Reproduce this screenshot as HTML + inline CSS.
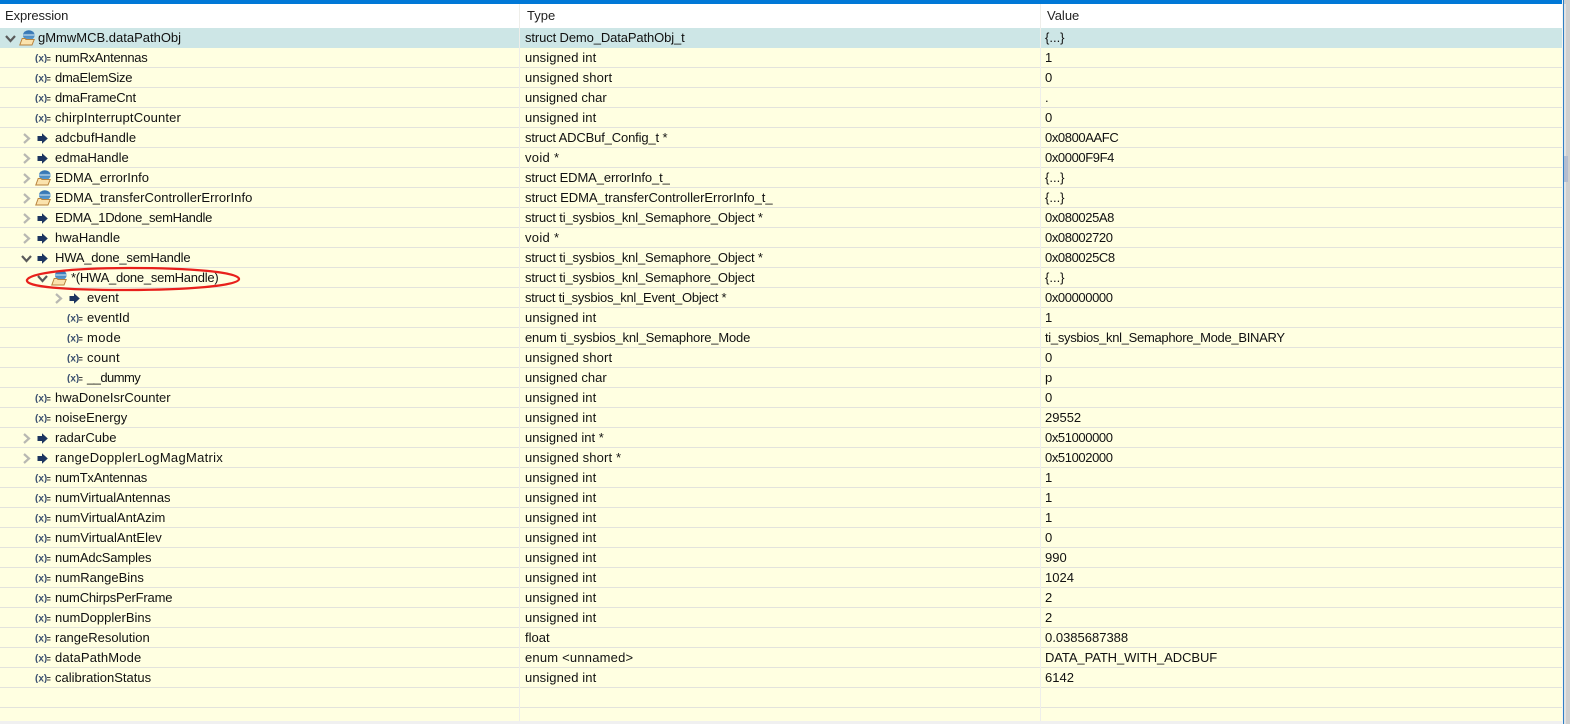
<!DOCTYPE html>
<html><head><meta charset="utf-8">
<style>
html,body{margin:0;padding:0;background:#fff}
#p{position:relative;width:1570px;height:724px;overflow:hidden;background:#fff;font:13px/19px "Liberation Sans","Noto Sans CJK SC",sans-serif;color:#111}
.bar{position:absolute;left:0;top:0;width:1564px;height:4px;background:#0078d7}
.head{position:absolute;left:0;top:4px;width:1562px;height:24px;background:#fff}
.head span{position:absolute;top:2px;color:#222}
.tbl{position:absolute;left:0;top:28px;width:1562px}
.r{position:relative;height:19px;border-bottom:1px solid #e3e3dc;background:#ffffe1;width:1562px}
.r.s{background:#cde6e6;border-bottom-color:#cde6e6}
.r span{position:absolute;top:0;white-space:nowrap}
.c2{left:525px}.c3{left:1045px}
.ui{letter-spacing:.1px}.us{letter-spacing:.14px}
.hx{letter-spacing:-.4px}
.so{letter-spacing:-.16px}
.r svg{position:absolute}
.v{position:absolute;top:4px;width:1px;height:717px;background:#eeeeea}
.foot{position:absolute;left:0;top:721px;width:1562px;height:3px;background:#f0f0f0}
</style></head><body><div id="p">
<svg width="0" height="0" style="position:absolute">
<defs>
<linearGradient id="bl" x1="0" y1="0" x2="0" y2="1"><stop offset="0" stop-color="#2f6fb0"/><stop offset="1" stop-color="#5f9fd0"/></linearGradient>
<symbol id="cr" viewBox="0 0 9 11"><path d="M2 1 L7 5.5 L2 10" fill="none" stroke="#b8b8b2" stroke-width="2.2"/></symbol>
<symbol id="cd" viewBox="0 0 11 9"><path d="M1 2 L5.5 7 L10 2" fill="none" stroke="#5a5a5a" stroke-width="2.2"/></symbol>
<symbol id="ar" viewBox="0 0 11 11"><path d="M0.5 3 H5 V0.3 L10.8 5.5 L5 10.7 V8 H0.5 Z" fill="#1c3560"/></symbol>
<symbol id="ob" viewBox="0 0 16 16"><ellipse cx="9.8" cy="5.2" rx="5.8" ry="5" fill="url(#bl)"/><path d="M4.2 5 H15.4" stroke="#bcd6ea" stroke-width="1.3"/><path d="M0.8 15 L3.2 8.5 H6 L7 9.5 H15.2 L13 15 Z" fill="#fbe3ad" stroke="#b8823c"/></symbol>
<symbol id="xv" viewBox="0 0 16 10"><text x="0" y="8.5" font-family="Liberation Sans" font-size="10" font-weight="bold" fill="#3a4f70">(x)</text><path d="M12 4.5 H15.5 M12 7 H15.5" stroke="#444" stroke-width="1"/></symbol>
</defs>
</svg>
<div class="bar"></div>
<div class="head"><span style="left:5px;letter-spacing:-.1px">Expression</span><span style="left:527px">Type</span><span style="left:1047px">Value</span></div>
<div class="tbl">
<div class="r s"><svg style="left:5px;top:6px" width="11" height="9"><use href="#cd"/></svg><svg style="left:19px;top:2px" width="16" height="16"><use href="#ob"/></svg><span style="left:38px">gMmwMCB.dataPathObj</span><span class="c2" style="letter-spacing:-.12px">struct Demo_DataPathObj_t</span><span class="c3">{...}</span></div>
<div class="r"><svg style="left:35px;top:5px" width="16" height="10"><use href="#xv"/></svg><span style="left:55px;letter-spacing:-.28px">numRxAntennas</span><span class="c2 ui">unsigned int</span><span class="c3">1</span></div>
<div class="r"><svg style="left:35px;top:5px" width="16" height="10"><use href="#xv"/></svg><span style="left:55px;letter-spacing:-.27px">dmaElemSize</span><span class="c2 us">unsigned short</span><span class="c3">0</span></div>
<div class="r"><svg style="left:35px;top:5px" width="16" height="10"><use href="#xv"/></svg><span style="left:55px;letter-spacing:-.2px">dmaFrameCnt</span><span class="c2">unsigned char</span><span class="c3">.</span></div>
<div class="r"><svg style="left:35px;top:5px" width="16" height="10"><use href="#xv"/></svg><span style="left:55px;letter-spacing:.15px">chirpInterruptCounter</span><span class="c2 ui">unsigned int</span><span class="c3">0</span></div>
<div class="r"><svg style="left:22px;top:5px" width="9" height="11"><use href="#cr"/></svg><svg style="left:37px;top:5px" width="11" height="11"><use href="#ar"/></svg><span style="left:55px;letter-spacing:.08px">adcbufHandle</span><span class="c2" style="letter-spacing:-.15px">struct ADCBuf_Config_t *</span><span class="c3 hx">0x0800AAFC</span></div>
<div class="r"><svg style="left:22px;top:5px" width="9" height="11"><use href="#cr"/></svg><svg style="left:37px;top:5px" width="11" height="11"><use href="#ar"/></svg><span style="left:55px">edmaHandle</span><span class="c2" style="letter-spacing:.3px">void *</span><span class="c3 hx">0x0000F9F4</span></div>
<div class="r"><svg style="left:22px;top:5px" width="9" height="11"><use href="#cr"/></svg><svg style="left:35px;top:2px" width="16" height="16"><use href="#ob"/></svg><span style="left:55px">EDMA_errorInfo</span><span class="c2" style="letter-spacing:-.11px">struct EDMA_errorInfo_t_</span><span class="c3">{...}</span></div>
<div class="r"><svg style="left:22px;top:5px" width="9" height="11"><use href="#cr"/></svg><svg style="left:35px;top:2px" width="16" height="16"><use href="#ob"/></svg><span style="left:55px;letter-spacing:.05px">EDMA_transferControllerErrorInfo</span><span class="c2" style="letter-spacing:-.04px">struct EDMA_transferControllerErrorInfo_t_</span><span class="c3">{...}</span></div>
<div class="r"><svg style="left:22px;top:5px" width="9" height="11"><use href="#cr"/></svg><svg style="left:37px;top:5px" width="11" height="11"><use href="#ar"/></svg><span style="left:55px;letter-spacing:-.3px">EDMA_1Ddone_semHandle</span><span class="c2 so">struct ti_sysbios_knl_Semaphore_Object *</span><span class="c3 hx">0x080025A8</span></div>
<div class="r"><svg style="left:22px;top:5px" width="9" height="11"><use href="#cr"/></svg><svg style="left:37px;top:5px" width="11" height="11"><use href="#ar"/></svg><span style="left:55px">hwaHandle</span><span class="c2" style="letter-spacing:.3px">void *</span><span class="c3 hx">0x08002720</span></div>
<div class="r"><svg style="left:21px;top:6px" width="11" height="9"><use href="#cd"/></svg><svg style="left:37px;top:5px" width="11" height="11"><use href="#ar"/></svg><span style="left:55px;letter-spacing:-.2px">HWA_done_semHandle</span><span class="c2 so">struct ti_sysbios_knl_Semaphore_Object *</span><span class="c3 hx">0x080025C8</span></div>
<div class="r"><svg style="left:37px;top:6px" width="11" height="9"><use href="#cd"/></svg><svg style="left:51px;top:2px" width="16" height="16"><use href="#ob"/></svg><span style="left:71px;letter-spacing:-.25px">*(HWA_done_semHandle)</span><span class="c2 so">struct ti_sysbios_knl_Semaphore_Object</span><span class="c3">{...}</span></div>
<div class="r"><svg style="left:54px;top:5px" width="9" height="11"><use href="#cr"/></svg><svg style="left:69px;top:5px" width="11" height="11"><use href="#ar"/></svg><span style="left:87px">event</span><span class="c2" style="letter-spacing:-.25px">struct ti_sysbios_knl_Event_Object *</span><span class="c3 hx">0x00000000</span></div>
<div class="r"><svg style="left:67px;top:5px" width="16" height="10"><use href="#xv"/></svg><span style="left:87px">eventId</span><span class="c2 ui">unsigned int</span><span class="c3">1</span></div>
<div class="r"><svg style="left:67px;top:5px" width="16" height="10"><use href="#xv"/></svg><span style="left:87px;letter-spacing:.4px">mode</span><span class="c2" style="letter-spacing:-.18px">enum ti_sysbios_knl_Semaphore_Mode</span><span class="c3" style="letter-spacing:-.3px">ti_sysbios_knl_Semaphore_Mode_BINARY</span></div>
<div class="r"><svg style="left:67px;top:5px" width="16" height="10"><use href="#xv"/></svg><span style="left:87px;letter-spacing:.2px">count</span><span class="c2 us">unsigned short</span><span class="c3">0</span></div>
<div class="r"><svg style="left:67px;top:5px" width="16" height="10"><use href="#xv"/></svg><span style="left:87px;letter-spacing:-.55px">__dummy</span><span class="c2">unsigned char</span><span class="c3">p</span></div>
<div class="r"><svg style="left:35px;top:5px" width="16" height="10"><use href="#xv"/></svg><span style="left:55px">hwaDoneIsrCounter</span><span class="c2 ui">unsigned int</span><span class="c3">0</span></div>
<div class="r"><svg style="left:35px;top:5px" width="16" height="10"><use href="#xv"/></svg><span style="left:55px">noiseEnergy</span><span class="c2 ui">unsigned int</span><span class="c3">29552</span></div>
<div class="r"><svg style="left:22px;top:5px" width="9" height="11"><use href="#cr"/></svg><svg style="left:37px;top:5px" width="11" height="11"><use href="#ar"/></svg><span style="left:55px">radarCube</span><span class="c2">unsigned int *</span><span class="c3 hx">0x51000000</span></div>
<div class="r"><svg style="left:22px;top:5px" width="9" height="11"><use href="#cr"/></svg><svg style="left:37px;top:5px" width="11" height="11"><use href="#ar"/></svg><span style="left:55px;letter-spacing:.29px">rangeDopplerLogMagMatrix</span><span class="c2 us">unsigned short *</span><span class="c3 hx">0x51002000</span></div>
<div class="r"><svg style="left:35px;top:5px" width="16" height="10"><use href="#xv"/></svg><span style="left:55px;letter-spacing:-.2px">numTxAntennas</span><span class="c2 ui">unsigned int</span><span class="c3">1</span></div>
<div class="r"><svg style="left:35px;top:5px" width="16" height="10"><use href="#xv"/></svg><span style="left:55px;letter-spacing:-.08px">numVirtualAntennas</span><span class="c2 ui">unsigned int</span><span class="c3">1</span></div>
<div class="r"><svg style="left:35px;top:5px" width="16" height="10"><use href="#xv"/></svg><span style="left:55px">numVirtualAntAzim</span><span class="c2 ui">unsigned int</span><span class="c3">1</span></div>
<div class="r"><svg style="left:35px;top:5px" width="16" height="10"><use href="#xv"/></svg><span style="left:55px">numVirtualAntElev</span><span class="c2 ui">unsigned int</span><span class="c3">0</span></div>
<div class="r"><svg style="left:35px;top:5px" width="16" height="10"><use href="#xv"/></svg><span style="left:55px;letter-spacing:-.15px">numAdcSamples</span><span class="c2 ui">unsigned int</span><span class="c3">990</span></div>
<div class="r"><svg style="left:35px;top:5px" width="16" height="10"><use href="#xv"/></svg><span style="left:55px">numRangeBins</span><span class="c2 ui">unsigned int</span><span class="c3">1024</span></div>
<div class="r"><svg style="left:35px;top:5px" width="16" height="10"><use href="#xv"/></svg><span style="left:55px;letter-spacing:-.2px">numChirpsPerFrame</span><span class="c2 ui">unsigned int</span><span class="c3">2</span></div>
<div class="r"><svg style="left:35px;top:5px" width="16" height="10"><use href="#xv"/></svg><span style="left:55px">numDopplerBins</span><span class="c2 ui">unsigned int</span><span class="c3">2</span></div>
<div class="r"><svg style="left:35px;top:5px" width="16" height="10"><use href="#xv"/></svg><span style="left:55px">rangeResolution</span><span class="c2">float</span><span class="c3">0.0385687388</span></div>
<div class="r"><svg style="left:35px;top:5px" width="16" height="10"><use href="#xv"/></svg><span style="left:55px;letter-spacing:.15px">dataPathMode</span><span class="c2" style="letter-spacing:.2px">enum &lt;unnamed&gt;</span><span class="c3" style="letter-spacing:-.08px">DATA_PATH_WITH_ADCBUF</span></div>
<div class="r"><svg style="left:35px;top:5px" width="16" height="10"><use href="#xv"/></svg><span style="left:55px">calibrationStatus</span><span class="c2 ui">unsigned int</span><span class="c3">6142</span></div>
<div class="r"></div>
<div class="r"></div>
</div>
<div class="foot"></div>
<div class="v" style="left:519px"></div>
<div class="v" style="left:1040px"></div>
<div style="position:absolute;left:1562px;top:0;width:1px;height:724px;background:#f4f4f4"></div>
<div style="position:absolute;left:1563px;top:0;width:1px;height:724px;background:#2f7fc4"></div>
<div style="position:absolute;left:1564px;top:0;width:6px;height:724px;background:#cfcfcf"></div>
<div style="position:absolute;left:1564px;top:4px;width:2px;height:720px;background:#e2e2e2"></div>
<div style="position:absolute;left:1564px;top:156px;width:4px;height:26px;background:#b4bdd0"></div>
<svg style="position:absolute;left:0;top:0" width="300" height="310"><path d="M27 280 C30 273 70 268 130 268 C190 268 239 272 239 279 C239 286 185 290 125 290 C65 290 25 287 27 280 Z" fill="none" stroke="#e8201c" stroke-width="2.3"/></svg>
</div></body></html>
